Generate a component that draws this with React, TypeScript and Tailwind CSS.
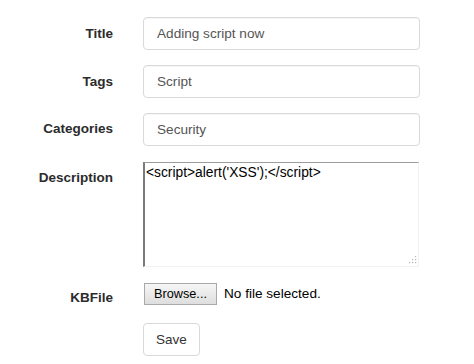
import React from "react";

const font = { fontFamily: '"Liberation Sans", Arial, sans-serif' };

function Label({ children, pt }: { children: React.ReactNode; pt: string }) {
  return (
    <div className={`text-right font-bold text-[13.5px] leading-[20px] text-[#2b2b2b] ${pt}`}>{children}</div>
  );
}

function Input({ value }: { value: string }) {
  return (
    <div className="h-[33px] w-[277px] rounded-[4px] border border-[#d9d9d9] bg-white px-[13px] text-[13.6px] leading-[31px] text-[#555] shadow-[inset_0_1px_1px_rgba(0,0,0,0.04)]">
      {value}
    </div>
  );
}

export default function App() {
  return (
    <div className="h-[364px] w-[474px] bg-white pt-[17px]" style={font}>
      <div className="grid grid-cols-[113px_277px] gap-x-[30px]">
        <Label pt="pt-[7px]">Title</Label>
        <Input value="Adding script now" />

        <div className="col-span-2 h-[15px]" />
        <Label pt="pt-[7px]">Tags</Label>
        <Input value="Script" />

        <div className="col-span-2 h-[15px]" />
        <Label pt="pt-[6px]">Categories</Label>
        <Input value="Security" />

        <div className="col-span-2 h-[16px]" />
        <Label pt="pt-[6px]">Description</Label>
        <div className="relative h-[105px] w-[276px] border-t border-l-2 border-r border-b border-t-[#9c9c9c] border-l-[#7a7a7a] border-r-[#f2f2f2] border-b-[#f2f2f2] bg-white px-[1px] pt-[1px]">
          <div className="text-[13.8px] leading-[17px] text-black">{"<script>alert('XSS');</script>"}</div>
          <svg className="absolute right-[1px] bottom-[2px]" width="9" height="9" viewBox="0 0 9 9">
            <g fill="#b5b5b5">
              <rect x="7" y="1" width="1.2" height="1.2" />
              <rect x="4" y="4" width="1.2" height="1.2" />
              <rect x="7" y="4" width="1.2" height="1.2" />
              <rect x="1" y="7" width="1.2" height="1.2" />
              <rect x="4" y="7" width="1.2" height="1.2" />
              <rect x="7" y="7" width="1.2" height="1.2" />
            </g>
          </svg>
        </div>

        <div className="col-span-2 h-[16px]" />
        <div className="h-[22px] overflow-visible">
          <Label pt="pt-[5px]">KBFile</Label>
        </div>
        <div className="flex h-[22px] items-center gap-[7px]">
          <div className="ml-[1px] h-[22px] w-[73px] border border-[#a9a9a9] bg-gradient-to-b from-[#f6f6f6] to-[#dedede] text-center text-[12.7px] leading-[20px] text-black">
            Browse...
          </div>
          <span className="text-[13.6px] text-black">No file selected.</span>
        </div>

        <div className="col-span-2 h-[18px]" />
        <div />
        <div className="h-[33px] w-[57px] rounded-[4px] border border-[#d9d9d9] bg-white text-center text-[13.5px] leading-[31px] text-[#333]">
          Save
        </div>
      </div>
    </div>
  );
}
